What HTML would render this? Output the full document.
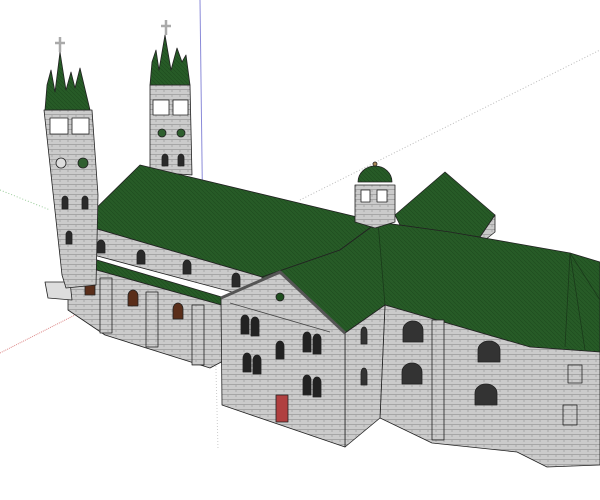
<!DOCTYPE html>
<html><head><style>html,body{margin:0;padding:0;background:#fff;width:600px;height:500px;overflow:hidden}</style></head>
<body>
<svg width="600" height="500" viewBox="0 0 600 500" xmlns="http://www.w3.org/2000/svg">
<defs>
<pattern id="st" width="8" height="5" patternUnits="userSpaceOnUse">
<rect width="8" height="5" fill="#cbcbcb"/><path d="M0 4.5H8M4 0V2" stroke="#9a9a9a" stroke-width="0.7"/>
</pattern>
<pattern id="rf" width="4" height="4" patternUnits="userSpaceOnUse">
<rect width="4" height="4" fill="#275b27"/><path d="M0 0L4 4" stroke="#1d4a1d" stroke-width="0.6"/>
</pattern>
</defs>
<g stroke-width="1">
<line x1="200" y1="0" x2="203" y2="240" stroke="#8a8ad8"/>
<line x1="0" y1="353" x2="75" y2="315" stroke="#d88" stroke-dasharray="1 1"/>
<line x1="0" y1="190" x2="50" y2="210" stroke="#9c9" stroke-dasharray="1 2"/>
<line x1="300" y1="200" x2="600" y2="50" stroke="#bbb" stroke-dasharray="1 2"/>
<line x1="215" y1="330" x2="218" y2="450" stroke="#ccc" stroke-dasharray="1 2"/>
</g>
<g stroke="#222" stroke-width="0.8" stroke-linejoin="round">
<polygon points="395,215 445,172 495,215 480,237 400,225" fill="url(#rf)"/>
<polygon points="480,237 495,215 495,232 485,240" fill="url(#st)"/>
<!-- right tower -->
<polygon points="150,85 190,85 192,175 150,172" fill="url(#st)"/>
<polygon points="150,85 152,62 156,50 159,70 165,35 171,70 177,48 182,62 186,55 190,85" fill="url(#rf)"/>
<path d="M166 35V20M161 26H171" stroke="#aaa" stroke-width="2.5"/>
<circle cx="162" cy="133" r="4" fill="#2f5f2f"/><circle cx="181" cy="133" r="4" fill="#2f5f2f"/>
<rect x="153" y="100" width="16" height="15" fill="#fff"/><rect x="173" y="100" width="15" height="15" fill="#fff"/>
<path d="M162 158a3 4 0 0 1 6 0v8h-6z M178 158a3 4 0 0 1 6 0v8h-6z" fill="#2a2a2a"/>
<!-- nave roof -->
<polygon points="80,224 140,165 378,222 340,250 262,277" fill="url(#rf)"/>
<polygon points="80,224 262,277 262,300 75,250" fill="url(#st)"/>
<path d="M97 245a4 5 0 0 1 8 0v8h-8z M137 255a4 5 0 0 1 8 0v9h-8z M183 265a4 5 0 0 1 8 0v9h-8z M232 278a4 5 0 0 1 8 0v9h-8z" fill="#2a2a2a"/>
<polygon points="70,252 225,298 225,306 68,262" fill="url(#rf)"/>
<polygon points="68,262 225,306 225,360 210,368 105,335 68,310" fill="url(#st)"/>
<rect x="100" y="278" width="12" height="55" fill="url(#st)"/>
<rect x="146" y="292" width="12" height="55" fill="url(#st)"/>
<rect x="192" y="305" width="12" height="60" fill="url(#st)"/>
<path d="M85 285a5 6 0 0 1 10 0v10h-10z M128 296a5 6 0 0 1 10 0v10h-10z M173 309a5 6 0 0 1 10 0v10h-10z" fill="#5a2e1a"/>
<polygon points="45,282 70,282 72,300 48,298" fill="#ddd"/>
<!-- left tower -->
<polygon points="44,110 92,110 98,195 96,285 66,288 62,275" fill="url(#st)"/>
<polygon points="45,110 47,85 51,70 55,92 60,52 66,90 71,72 75,88 80,68 90,110" fill="url(#rf)"/>
<path d="M60 52V37M55 43H65" stroke="#aaa" stroke-width="2.5"/>
<rect x="50" y="118" width="18" height="16" fill="#fff"/><rect x="72" y="118" width="17" height="16" fill="#fff"/>
<circle cx="61" cy="163" r="5" fill="#ddd"/><circle cx="83" cy="163" r="5" fill="#2f5f2f"/>
<path d="M62 200a3 4 0 0 1 6 0v9h-6z M82 200a3 4 0 0 1 6 0v9h-6z M66 235a3 4 0 0 1 6 0v9h-6z" fill="#2a2a2a"/>
<!-- transept roof -->
<polygon points="262,277 340,250 378,222 450,232 570,253 600,262 600,352 530,347 385,305 345,333" fill="url(#rf)"/>
<path d="M570 253L565 347M570 253L585 350M570 253L600 300M378 222L385 305" stroke="#1a3a1a" fill="none"/>
<polygon points="385,305 530,347 600,352 600,465 547,467 517,452 432,443 380,418" fill="url(#st)"/>
<rect x="432" y="320" width="12" height="120" fill="url(#st)"/>
<polygon points="345,333 385,305 380,418 345,447" fill="url(#st)"/>
<path d="M403 330a10 9 0 0 1 20 0v12h-20z M402 372a10 9 0 0 1 20 0v12h-20z M478 350a11 9 0 0 1 22 0v12h-22z M475 393a11 9 0 0 1 22 0v12h-22z M361 332a3 5 0 0 1 6 0v12h-6z M361 373a3 5 0 0 1 6 0v12h-6z" fill="#333"/>
<rect x="568" y="365" width="14" height="18" fill="none"/><rect x="563" y="405" width="14" height="20" fill="none"/>
<!-- front facade -->
<polygon points="221,298 280,272 345,333 345,447 222,405" fill="url(#st)"/>
<path d="M221 298L280 272L345 333" stroke="#555" stroke-width="3" fill="none"/>
<path d="M230 303L330 332" stroke="#444" fill="none"/>
<circle cx="280" cy="297" r="4" fill="#1f4f1f"/>
<path d="M241 320a4 5 0 0 1 8 0v14h-8z M251 322a4 5 0 0 1 8 0v14h-8z M303 337a4 5 0 0 1 8 0v15h-8z M313 339a4 5 0 0 1 8 0v15h-8z M243 358a4 5 0 0 1 8 0v14h-8z M253 360a4 5 0 0 1 8 0v14h-8z M303 380a4 5 0 0 1 8 0v15h-8z M313 382a4 5 0 0 1 8 0v15h-8z M276 346a4 5 0 0 1 8 0v13h-8z" fill="#222"/>
<rect x="276" y="395" width="12" height="27" fill="#b04040"/>
<!-- cupola -->
<polygon points="355,185 395,185 395,222 375,228 355,222" fill="url(#st)"/>
<rect x="361" y="190" width="9" height="12" fill="#fff"/><rect x="377" y="190" width="10" height="12" fill="#fff"/>
<path d="M358 182a17 16 0 0 1 34 0z" fill="url(#rf)"/>
<circle cx="375" cy="164" r="2" fill="#a85"/>
</g>
</svg>
</body></html>
